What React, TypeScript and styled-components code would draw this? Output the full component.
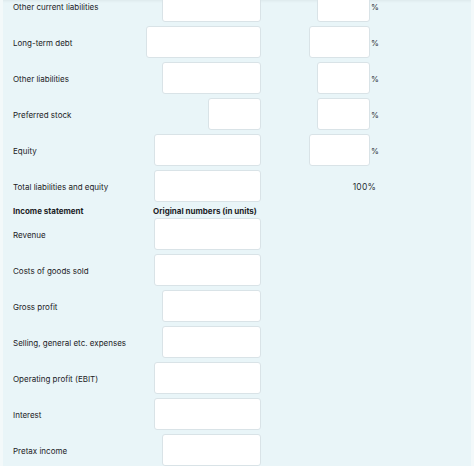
import React from "react";
import styled, { createGlobalStyle } from "styled-components";

const Global = createGlobalStyle`
  html, body { margin: 0; padding: 0; background: #f3f9fa; }
  body { font-family: Inter, "Noto Sans", sans-serif; color: #1c2226; }
`;

const Panel = styled.div`
  margin: 0 3px;
  height: 466px;
  overflow: hidden;
  background: #e9f5f8;
  box-shadow: inset 0 3px 3px -2px rgba(0, 0, 0, 0.06);
`;

const Sheet = styled.div`
  margin-top: -10px;
  padding-left: 10px;
  display: flex;
  flex-direction: column;
  gap: 4px;
`;

const Row = styled.div`
  display: grid;
  grid-template-columns: 132px 116px 109px auto;
  align-items: center;
  height: 32px;
`;

const HeadRow = styled(Row)`
  height: 8px;
`;

const Label = styled.div`
  font-size: 8px;
  white-space: nowrap;
  padding-top: 2px;
`;

const Heading = styled.div<{ $indent?: number }>`
  font-size: 8px;
  font-weight: 700;
  white-space: nowrap;
  padding-left: ${(p) => p.$indent ?? 0}px;
`;

const Cell = styled.div`
  display: flex;
  justify-content: flex-end;
  height: 100%;
`;

const Box = styled.div<{ $w: number }>`
  width: ${(p) => p.$w}px;
  height: 32px;
  box-sizing: border-box;
  background: #ffffff;
  border: 1px solid #d9e3e7;
  border-radius: 3px;
`;

const Pct = styled.div`
  font-size: 8px;
  padding-left: 1px;
  padding-top: 2px;
  color: #2a3035;
`;

const Hundred = styled.div`
  grid-column: 3 / 5;
  width: 115px;
  text-align: right;
  font-size: 8.5px;
  letter-spacing: 0.2px;
  padding-top: 2px;
  color: #2a3035;
`;

type BRow = { label: string; w1: number; w2?: number; total?: boolean };

const balance: BRow[] = [
  { label: "Other current liabilities", w1: 99, w2: 53 },
  { label: "Long-term debt", w1: 115, w2: 61 },
  { label: "Other liabilities", w1: 99, w2: 53 },
  { label: "Preferred stock", w1: 53, w2: 53 },
  { label: "Equity", w1: 107, w2: 61 },
  { label: "Total liabilities and equity", w1: 107, total: true },
];

const income: { label: string; w: number }[] = [
  { label: "Revenue", w: 107 },
  { label: "Costs of goods sold", w: 107 },
  { label: "Gross profit", w: 99 },
  { label: "Selling, general etc. expenses", w: 99 },
  { label: "Operating profit (EBIT)", w: 107 },
  { label: "Interest", w: 107 },
  { label: "Pretax income", w: 99 },
];

export default function App() {
  return (
    <>
      <Global />
      <Panel>
        <Sheet>
          {balance.map((r) => (
            <Row key={r.label}>
              <Label>{r.label}</Label>
              <Cell>
                <Box $w={r.w1} />
              </Cell>
              {r.total ? (
                <Hundred>100%</Hundred>
              ) : (
                <>
                  <Cell>
                    <Box $w={r.w2 ?? 53} />
                  </Cell>
                  <Pct>%</Pct>
                </>
              )}
            </Row>
          ))}
          <HeadRow>
            <Heading>Income statement</Heading>
            <Heading $indent={8}>Original numbers (in units)</Heading>
          </HeadRow>
          {income.map((r) => (
            <Row key={r.label}>
              <Label>{r.label}</Label>
              <Cell>
                <Box $w={r.w} />
              </Cell>
            </Row>
          ))}
        </Sheet>
      </Panel>
    </>
  );
}
